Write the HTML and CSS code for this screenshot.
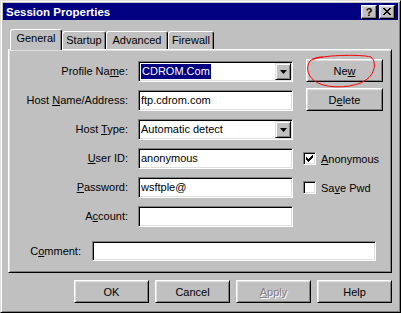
FILE: index.html
```html
<!DOCTYPE html>
<html>
<head>
<meta charset="utf-8">
<link rel="stylesheet" href="styles.css">
</head>
<body>
<div class="window">
  <div class="titlebar">
    <span class="title">Session Properties</span>
    <div class="tbtns">
      <span class="tbtn">?</span>
      <span class="tbtn"><svg width="8" height="7" viewBox="0 0 8 7"><path d="M0 0h2v1h1v1h2v-1h1v-1h2v1h-1v1h-1v1h-1v1h1v1h1v1h1v1h-2v-1h-1v-1h-2v1h-1v1h-2v-1h1v-1h1v-1h1v-1h-1v-1h-1v-1h-1z" fill="#000"/></svg></span>
    </div>
  </div>
  <div class="content">
    <div class="tabs">
      <div class="tab sel w-gen">General</div>
      <div class="tab w-start">Startup</div>
      <div class="tab w-adv">Advanced</div>
      <div class="tab w-fw">Firewall</div>
    </div>
    <div class="panel">
      <div class="form">
        <div class="lbl">Profile Na<u>m</u>e:</div>
        <div class="field combo"><span class="hl">CDROM.Com</span><span class="ddbtn"><svg width="7" height="4" viewBox="0 0 7 4"><path d="M0 0h7l-3.5 4z" fill="#000"/></svg></span></div>
        <div class="rc"><button class="btn side">Ne<u>w</u></button></div>

        <div class="lbl">Host <u>N</u>ame/Address:</div>
        <div class="field">ftp.cdrom.com</div>
        <div class="rc"><button class="btn side">D<u>e</u>lete</button></div>

        <div class="lbl">Host <u>T</u>ype:</div>
        <div class="field combo"><span>Automatic detect</span><span class="ddbtn"><svg width="7" height="4" viewBox="0 0 7 4"><path d="M0 0h7l-3.5 4z" fill="#000"/></svg></span></div>
        <div class="rc"></div>

        <div class="lbl"><u>U</u>ser ID:</div>
        <div class="field">anonymous</div>
        <div class="rc check"><span class="box"><svg width="7" height="7" viewBox="0 0 7 7"><path d="M0 2h1v1h1v1h1v-1h1v-1h1v-1h1v-1h1v3h-1v1h-1v1h-1v1h-1v1h-1v-1h-1v-1h-1z" fill="#000"/></svg></span><span><u>A</u>nonymous</span></div>

        <div class="lbl"><u>P</u>assword:</div>
        <div class="field">wsftple@</div>
        <div class="rc check"><span class="box"></span><span>Sa<u>v</u>e Pwd</span></div>

        <div class="lbl">A<u>c</u>count:</div>
        <div class="field"></div>
        <div class="rc"></div>
      </div>
      <div class="crow">
        <div class="clbl">C<u>o</u>mment:</div>
        <div class="field cfield"></div>
      </div>
    </div>
    <div class="actions">
      <button class="btn act">OK</button>
      <button class="btn act">Cancel</button>
      <button class="btn act disabled"><u>A</u>pply</button>
      <button class="btn act">Help</button>
    </div>
  </div>
  <svg class="scribble" width="401" height="313" viewBox="0 0 401 313">
    <path d="M312 60 C320 55, 360 54, 371 57 C377 62, 375 74, 366 80 C355 88, 330 89, 318 83 C308 78, 305 68, 310 61 C313 58, 318 57, 323 57" fill="none" stroke="#ff0000" stroke-width="1"/>
  </svg>
</div>
</body>
</html>
```

FILE: styles.css
```css
* { box-sizing: border-box; }
html, body { margin: 0; padding: 0; }
body {
  background: #c0c0c0;
  font-family: "Liberation Sans", Arial, sans-serif;
  font-size: 11px;
  color: #000;
  width: 401px;
  height: 313px;
  overflow: hidden;
}
.window {
  position: relative;
  width: 401px;
  height: 313px;
  background: #c0c0c0;
  border: 1px solid;
  border-color: #dfdfdf #000 #000 #dfdfdf;
  box-shadow: inset 1px 1px #fff, inset -1px -1px #808080;
  padding: 2px;
}
.titlebar {
  height: 17px;
  background: #000080;
  display: flex;
  align-items: center;
  justify-content: space-between;
  padding: 0 3px 0 3px;
}
.title {
  color: #fff;
  font-weight: bold;
  font-size: 11.5px;
}
.tbtns { display: flex; gap: 2px; }
.tbtn {
  width: 16px;
  height: 14px;
  background: #c0c0c0;
  border: 1px solid;
  border-color: #fff #000 #000 #fff;
  box-shadow: inset -1px -1px #808080, inset 1px 1px #dfdfdf;
  display: flex;
  align-items: center;
  justify-content: center;
  font-weight: bold;
  font-size: 11px;
  line-height: 12px;
}
.content { padding: 9px 6px 0 5px; }
.tabs {
  display: flex;
  align-items: flex-end;
  height: 20px;
  margin-left: 2px;
  position: relative;
  z-index: 1;
}
.tab {
  height: 18px;
  border: 1px solid;
  border-bottom: 0;
  border-color: #fff #000 transparent #fff;
  border-radius: 3px 3px 0 0;
  box-shadow: inset -1px 0 #808080;
  text-align: center;
  line-height: 16px;
  background: #c0c0c0;
}
.tab.sel {
  height: 21px;
  margin-bottom: -1px;
  line-height: 17px;
}
.w-gen { width: 52px; }
.w-start { width: 44px; }
.w-adv { width: 62px; }
.w-fw { width: 46px; }
.panel {
  height: 224px;
  border: 1px solid;
  border-color: #fff #000 #000 #fff;
  box-shadow: inset 1px 1px #dfdfdf, inset -1px -1px #808080;
  padding: 11px 0 0 1px;
}
.form {
  display: grid;
  grid-template-columns: 118px 155px 1fr;
  column-gap: 10px;
  row-gap: 8px;
  grid-auto-rows: 21px;
}
.lbl {
  text-align: right;
  line-height: 21px;
  white-space: nowrap;
}
.field {
  background: #fff;
  border: 1px solid;
  border-color: #808080 #fff #fff #808080;
  box-shadow: inset 1px 1px #000, inset -1px -1px #dfdfdf;
  padding: 0 0 0 2px;
  height: 21px;
  line-height: 19px;
  white-space: nowrap;
}
.combo {
  display: flex;
  align-items: center;
}
.hl {
  background: #000080;
  color: #fff;
  line-height: 15px;
  padding: 0 1px 0 1px;
}
.ddbtn {
  width: 16px;
  height: 17px;
  margin-left: auto;
  margin-right: 1px;
  background: #c0c0c0;
  border: 1px solid;
  border-color: #dfdfdf #000 #000 #dfdfdf;
  box-shadow: inset 1px 1px #fff, inset -1px -1px #808080;
  display: flex;
  align-items: center;
  justify-content: center;
}
.btn {
  background: #c0c0c0;
  border: 1px solid;
  border-color: #fff #000 #000 #fff;
  box-shadow: inset 1px 1px #dfdfdf, inset -1px -1px #808080;
  font-family: "Liberation Sans", Arial, sans-serif;
  font-size: 11px;
  color: #000;
  padding: 0;
  height: 23px;
}
.side {
  width: 77px;
  margin: -2px 0 0 3px;
}
.check {
  display: flex;
  align-items: center;
  gap: 5px;
}
.box {
  width: 13px;
  height: 13px;
  background: #fff;
  border: 1px solid;
  border-color: #808080 #fff #fff #808080;
  box-shadow: inset 1px 1px #000, inset -1px -1px #dfdfdf;
  display: flex;
  align-items: center;
  justify-content: center;
}
.crow {
  display: flex;
  align-items: center;
  margin-top: 14px;
}
.clbl {
  width: 71px;
  text-align: right;
  margin-right: 11px;
}
.cfield {
  width: 284px;
  height: 20px;
}
.actions {
  display: flex;
  justify-content: flex-end;
  gap: 6px;
  margin-top: 7px;
}
.act { width: 75px; }
.disabled {
  color: #808080;
  text-shadow: 1px 1px #fff;
}
.scribble {
  position: absolute;
  left: -1px;
  top: -1px;
  pointer-events: none;
}
```
